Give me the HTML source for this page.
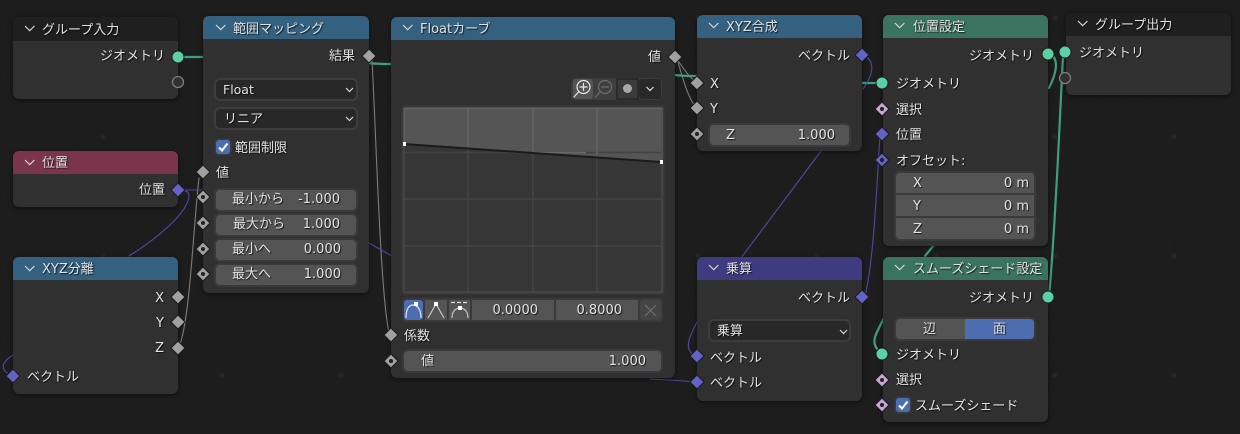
<!DOCTYPE html>
<html><head><meta charset="utf-8">
<style>
html,body{margin:0;padding:0}
body{width:1240px;height:434px;position:relative;overflow:hidden;background-color:#1d1d1d;
background-image:radial-gradient(circle,#262626 2.2px,transparent 2.8px),radial-gradient(circle,#212121 .8px,transparent 1.2px);
background-size:119px 119px,23.8px 23.8px;background-position:43.5px -41.5px,-8.4px -5.4px;
font-family:"DejaVu Sans","Noto Sans CJK JP",sans-serif;font-size:13px;color:#e2e2e2}
.n,.h,.f,.d,.t,svg{position:absolute}
.n{background:#303030;border-radius:6px;box-shadow:0 1px 5px rgba(0,0,0,.55)}
.h{border-radius:6px 6px 0 0;height:23px}
.t{white-space:nowrap;line-height:16px;height:16px;margin-top:2px;text-shadow:1px 1px 1px rgba(0,0,0,.75)}
.f{background:#545454;border-radius:4px;box-shadow:0 0 0 2px #3a3a3a;height:20px}
.d{background:#282828;border-radius:4px;box-shadow:0 0 0 2px #3d3d3d;height:19px}
.c{fill:none;stroke:#d8d8d8;stroke-width:1.2}
</style></head>
<body>
<svg style="left:0;top:0" width="1240" height="434" fill="none" stroke-linecap="round">
<g stroke="#3f9e80" stroke-width="2.2">
<path d="M178 57H205"/><path d="M369 63C375 64 380 64 392 64"/><path d="M675 75C682 76 688 76 698 76"/><path d="M862 83H882"/>
<path d="M1053 56C1058 62 1057 72 1049 88"/><path d="M1063 57C1060 110 1056 220 1049 297"/>
<path d="M925 256L934 245"/><path d="M884 318C874 338 870 342 881 354"/>
</g>
<g stroke="#7c7c7c" stroke-width="1.100">
<path d="M199 178C193 230 190 320 179 347"/><path d="M372 60C376 130 380 290 389 333"/>
<path d="M677 59C684 70 690 78 697 83"/><path d="M677 59C682 75 688 100 697 108"/>
</g>
<g stroke="#4b4aa3" stroke-width="1.100">
<path d="M180 191C195 188 190 205 173 222C160 235 145 246 129 256"/><path d="M180 190H203"/>
<path d="M13 376C-2 370 2 362 13 355"/><path d="M369 243L392 256"/>
<path d="M864 55C876 62 873 75 863 89"/><path d="M880 135C877 180 874 260 865 296"/>
<path d="M821 151L738 262"/><path d="M697 357C683 350 688 340 697 322"/>
<path d="M650 379C670 380 685 381 697 382"/>
</g>
</svg>

<div class="n" style="left:13px;top:17px;width:165px;height:82px"></div>
<div class="h" style="left:13px;top:17px;width:165px;height:24px;background:#1f1f1f"></div>
<div class="n" style="left:203px;top:16px;width:166px;height:277px"></div>
<div class="h" style="left:203px;top:16px;width:166px;background:#33617f"></div>
<div class="n" style="left:13px;top:151px;width:165px;height:56px"></div>
<div class="h" style="left:13px;top:151px;width:165px;background:#7a344b"></div>
<div class="n" style="left:13px;top:257px;width:165px;height:137px"></div>
<div class="h" style="left:13px;top:257px;width:165px;background:#33617f"></div>
<div class="n" style="left:391px;top:17px;width:284px;height:361px"></div>
<div class="h" style="left:391px;top:17px;width:284px;background:#33617f"></div>
<div class="n" style="left:697px;top:15px;width:165px;height:136px"></div>
<div class="h" style="left:697px;top:15px;width:165px;background:#33617f"></div>
<div class="n" style="left:697px;top:257px;width:165px;height:144px"></div>
<div class="h" style="left:697px;top:257px;width:165px;background:#3f3b80"></div>
<div class="n" style="left:883px;top:15px;width:165px;height:231px"></div>
<div class="h" style="left:883px;top:15px;width:165px;background:#3a7360"></div>
<div class="n" style="left:883px;top:257px;width:165px;height:165px"></div>
<div class="h" style="left:883px;top:257px;width:165px;background:#3a7360"></div>
<div class="n" style="left:1066px;top:13px;width:165px;height:82px"></div>
<div class="h" style="left:1066px;top:13px;width:165px;background:#1f1f1f"></div>

<svg style="left:0;top:0" width="1240" height="434" class="c">
<path d="M25 26l4.7 4.7L34.400 26"/><path d="M216 25l4.700 4.700L225.400 25"/><path d="M25 160l4.700 4.700L34.400 160"/><path d="M25 266l4.700 4.700L34.400 266"/><path d="M403 25l4.700 4.700L412.400 25"/><path d="M709 23l4.700 4.700L718.400 23"/><path d="M709 265l4.700 4.700L718.400 265"/><path d="M895 23l4.700 4.700L904.400 23"/><path d="M895 265l4.700 4.700L904.400 265"/><path d="M1078 21l4.700 4.700L1087.400 21"/>
</svg>

<div class="t" style="left:42px;top:21px">グループ入力</div>
<div class="t" style="left:233px;top:20px">範囲マッピング</div>
<div class="t" style="left:42px;top:154px">位置</div>
<div class="t" style="left:42px;top:260px">XYZ分離</div>
<div class="t" style="left:420px;top:20px">Floatカーブ</div>
<div class="t" style="left:726px;top:18px">XYZ合成</div>
<div class="t" style="left:726px;top:260px">乗算</div>
<div class="t" style="left:913px;top:18px">位置設定</div>
<div class="t" style="left:913px;top:260px">スムーズシェード設定</div>
<div class="t" style="left:1095px;top:16px">グループ出力</div>

<div class="t" style="right:1075px;top:47px">ジオメトリ</div>
<div class="t" style="right:885px;top:47px">結果</div>
<div class="t" style="right:1075px;top:181px">位置</div>
<div class="t" style="right:1076px;top:289px">X</div>
<div class="t" style="right:1076px;top:314px">Y</div>
<div class="t" style="right:1076px;top:339px">Z</div>
<div class="t" style="left:27px;top:368px">ベクトル</div>

<div class="d" style="left:216px;top:80px;width:140px"></div><div class="t" style="left:223px;top:80px;font-size:12.500px">Float</div>
<div class="d" style="left:216px;top:109px;width:140px"></div><div class="t" style="left:224px;top:110px">リニア</div>
<svg style="left:344px;top:86px" width="12" height="35" class="c"><path d="M2 2l3.500 3.500L9 2M2 31l3.500 3.500L9 31"/></svg>
<div style="position:absolute;left:216px;top:140px;width:14px;height:14px;background:#4c6eb0;border-radius:3px;box-shadow:0 0 0 1.500px #3c3c3c"></div>
<svg style="left:216px;top:140px" width="14" height="14" fill="none" stroke="#fff" stroke-width="2"><path d="M3 7.500l3 3L11.500 3.500"/></svg>
<div class="t" style="left:235px;top:139px">範囲制限</div>
<div class="t" style="left:216px;top:164px">値</div>
<div class="f" style="left:216px;top:190px;width:140px"></div><div class="t" style="left:232px;top:190px">最小から</div><div class="t" style="right:900px;top:190px">-1.000</div>
<div class="f" style="left:216px;top:215px;width:140px"></div><div class="t" style="left:233px;top:215px">最大から</div><div class="t" style="right:900px;top:215px">1.000</div>
<div class="f" style="left:216px;top:240px;width:140px"></div><div class="t" style="left:232px;top:240px">最小へ</div><div class="t" style="right:899px;top:240px">0.000</div>
<div class="f" style="left:216px;top:265px;width:140px"></div><div class="t" style="left:232px;top:265px">最大へ</div><div class="t" style="right:899px;top:265px">1.000</div>

<div class="t" style="right:579px;top:48px">値</div>
<svg style="left:570px;top:77px" width="94" height="24">
<rect x="1" y="1" width="91" height="22" rx="5" fill="#3c3c3c"/>
<rect x="3" y="2" width="20" height="20" rx="3" fill="#545454"/>
<rect x="25" y="2" width="21" height="20" fill="#3f3f3f"/>
<rect x="47" y="2" width="21" height="20" fill="#3a3a3a" stroke="#262626" stroke-width="1.500"/>
<rect x="69" y="2" width="22" height="20" rx="3" fill="#282828"/>
<g fill="none" stroke="#e6e6e6" stroke-width="1.200"><circle cx="13.500" cy="10" r="6.500"/><path d="M10 10h7M13.500 6.500v7M8.500 15L4 20" stroke-linecap="round"/></g>
<g fill="none" stroke="#6d6d6d" stroke-width="1.200"><circle cx="35" cy="10" r="6.500"/><path d="M31.500 10h7M30 15L25.500 20" stroke-linecap="round"/></g>
<circle cx="57.500" cy="11.500" r="4.500" fill="#a8a8a8"/>
<path d="M76.500 10l3.500 3.500L83.500 10" fill="none" stroke="#e0e0e0" stroke-width="1.200"/>
</svg>
<svg style="left:401px;top:105px" width="264" height="190">
<rect x="0.500" y="0.500" width="263" height="189" rx="3" fill="#3a3a3a"/>
<rect x="2" y="2" width="260" height="186" fill="#363636"/>
<path d="M3 39L260 57V3H3Z" fill="#555"/>
<g stroke="#434343" stroke-width="1.500" fill="none"><path d="M67 3V187M132 3V187M196 3V187M3 47.500H260M3 94H260M3 141H260"/></g>
<g stroke="#686868" stroke-width="1.500" fill="none"><path d="M67 3V42.500M132 3V47M196 3V51M132 47.500H185"/></g>
<path d="M3 3H261V57M3 3V39" fill="none" stroke="#6a6a6a" stroke-width="1"/>
<path d="M3 39V187H261V57" fill="none" stroke="#505050" stroke-width="1"/>
<path d="M3 39L260 57" stroke="#1a1a1a" stroke-width="2"/>
<rect x="2" y="37" width="3" height="4" fill="#fff"/><rect x="259" y="55" width="3" height="4" fill="#fff"/>
</svg>
<svg style="left:402px;top:298px" width="261" height="24">
<rect x="0" y="0" width="261" height="24" rx="4" fill="#3a3a3a"/>
<rect x="2" y="2" width="19" height="20" rx="3" fill="#4c6eb0"/>
<rect x="23" y="2" width="22" height="20" fill="#545454"/><rect x="47" y="2" width="21" height="20" fill="#545454"/>
<rect x="70" y="2" width="82" height="20" fill="#545454"/><rect x="154" y="2" width="82" height="20" fill="#545454"/>
<rect x="238" y="2" width="21" height="20" rx="3" fill="#444"/>
<g fill="none" stroke-width="1.200"><path d="M4 20C4 11 7 7 11 7S19 11 19 20" stroke="#e8e8e8"/><path d="M26 20L34 6L42 20" stroke="#c8c8c8"/><path d="M50 20C50 13 54 10 58 10S66 13 66 20" stroke="#c8c8c8"/><path d="M49 4.500H65" stroke="#e0e0e0" stroke-dasharray="4 2"/><path d="M243 7L254 18M254 7L243 18" stroke="#6f6f6f"/></g>
<rect x="12" y="4" width="4" height="4" fill="#fff"/><rect x="32" y="4" width="4" height="4" fill="#fff"/><rect x="56" y="8" width="4" height="4" fill="#fff"/>
</svg>
<div class="t" style="right:702px;top:301px">0.0000</div><div class="t" style="right:618px;top:301px">0.8000</div>
<div class="t" style="left:404px;top:327px">係数</div>
<div class="f" style="left:404px;top:351px;width:257px"></div><div class="t" style="left:421px;top:352px">値</div><div class="t" style="right:594px;top:352px">1.000</div>

<div class="t" style="right:390px;top:47px">ベクトル</div>
<div class="t" style="left:710px;top:75px">X</div><div class="t" style="left:710px;top:100px">Y</div>
<div class="f" style="left:710px;top:125px;width:139px"></div><div class="t" style="left:726px;top:126px">Z</div><div class="t" style="right:405px;top:126px">1.000</div>

<div class="t" style="right:390px;top:289px">ベクトル</div>
<div class="d" style="left:710px;top:321px;width:139px"></div><div class="t" style="left:717px;top:322px">乗算</div>
<svg style="left:838px;top:328px" width="12" height="8" class="c"><path d="M2 2l3.500 3.500L9 2"/></svg>
<div class="t" style="left:710px;top:349px">ベクトル</div><div class="t" style="left:710px;top:374px">ベクトル</div>

<div class="t" style="right:206px;top:47px">ジオメトリ</div>
<div class="t" style="left:896px;top:75px">ジオメトリ</div>
<div class="t" style="left:896px;top:101px">選択</div>
<div class="t" style="left:896px;top:126px">位置</div>
<div class="t" style="left:896px;top:152px">オフセット:</div>
<div style="position:absolute;left:896px;top:173px;width:138px;height:66px;background:#3a3a3a;border-radius:4px;box-shadow:0 0 0 2px #3a3a3a"></div>
<div class="f" style="left:896px;top:173px;width:138px;box-shadow:none;border-radius:4px 4px 0 0;height:20px"></div><div class="t" style="left:913px;top:174px">X</div><div class="t" style="right:211px;top:174px">0 m</div>
<div class="f" style="left:896px;top:195px;width:138px;box-shadow:none;border-radius:0;height:21px"></div><div class="t" style="left:913px;top:197px">Y</div><div class="t" style="right:211px;top:197px">0 m</div>
<div class="f" style="left:896px;top:218px;width:138px;box-shadow:none;border-radius:0 0 4px 4px;height:21px"></div><div class="t" style="left:913px;top:220px">Z</div><div class="t" style="right:211px;top:220px">0 m</div>

<div class="t" style="right:206px;top:289px">ジオメトリ</div>
<div class="f" style="left:896px;top:319px;width:138px"></div>
<div style="position:absolute;left:965px;top:319px;width:69px;height:20px;background:#4c6eb0;border-radius:0 4px 4px 0"></div>
<div class="t" style="left:923px;top:320px">辺</div><div class="t" style="left:993px;top:320px">面</div>
<div class="t" style="left:896px;top:346px">ジオメトリ</div>
<div class="t" style="left:896px;top:371px">選択</div>
<div style="position:absolute;left:896px;top:398px;width:14px;height:14px;background:#4c6eb0;border-radius:3px;box-shadow:0 0 0 1.500px #3c3c3c"></div>
<svg style="left:896px;top:398px" width="14" height="14" fill="none" stroke="#fff" stroke-width="2"><path d="M3 7.500l3 3L11.500 3.500"/></svg>
<div class="t" style="left:915px;top:397px">スムーズシェード</div>
<div class="t" style="left:1079px;top:44px">ジオメトリ</div>

<svg style="left:0;top:0" width="1240" height="434" stroke="#1c1c1c" stroke-width="1">
<defs><path id="q" d="M0 -7L7 0L0 7L-7 0Z"/></defs>
<g fill="#a1a1a1">
<use href="#q" x="369" y="56"/><use href="#q" x="203" y="172"/><use href="#q" x="203" y="197"/><use href="#q" x="203" y="223"/><use href="#q" x="203" y="249"/><use href="#q" x="203" y="274"/>
<use href="#q" x="178" y="297"/><use href="#q" x="178" y="322"/><use href="#q" x="178" y="348"/><use href="#q" x="675" y="57"/><use href="#q" x="391" y="335"/><use href="#q" x="391" y="361"/>
<use href="#q" x="697" y="83"/><use href="#q" x="697" y="108"/><use href="#q" x="697" y="134"/>
</g>
<g fill="#6363c7">
<use href="#q" x="178" y="190"/><use href="#q" x="13" y="376"/><use href="#q" x="862" y="55"/><use href="#q" x="882" y="134"/><use href="#q" x="882" y="160"/><use href="#q" x="862" y="297"/><use href="#q" x="697" y="356"/><use href="#q" x="697" y="382"/>
</g>
<g fill="#c9a6d8">
<use href="#q" x="882" y="109"/><use href="#q" x="882" y="380"/><use href="#q" x="882" y="405"/>
</g>
<g fill="#222" stroke="none">
<circle cx="203" cy="197" r="2"/><circle cx="203" cy="223" r="2"/><circle cx="203" cy="249" r="2"/><circle cx="203" cy="274" r="2"/><circle cx="391" cy="361" r="2"/><circle cx="697" cy="134" r="2"/><circle cx="882" cy="160" r="2"/><circle cx="882" cy="109" r="2"/><circle cx="882" cy="380" r="2"/><circle cx="882" cy="405" r="2"/>
</g>
<g fill="#5ccfa5">
<circle cx="178" cy="57" r="6"/><circle cx="1048" cy="54" r="6"/><circle cx="1065" cy="52" r="6"/><circle cx="882" cy="83" r="6"/><circle cx="1048" cy="297" r="6"/><circle cx="882" cy="354" r="6"/>
</g>
<g fill="#303030" stroke="#7c7c7c" stroke-width="1.300"><circle cx="178" cy="82" r="5.500"/><circle cx="1065" cy="78" r="5.500"/></g>
</svg>
</body></html>
